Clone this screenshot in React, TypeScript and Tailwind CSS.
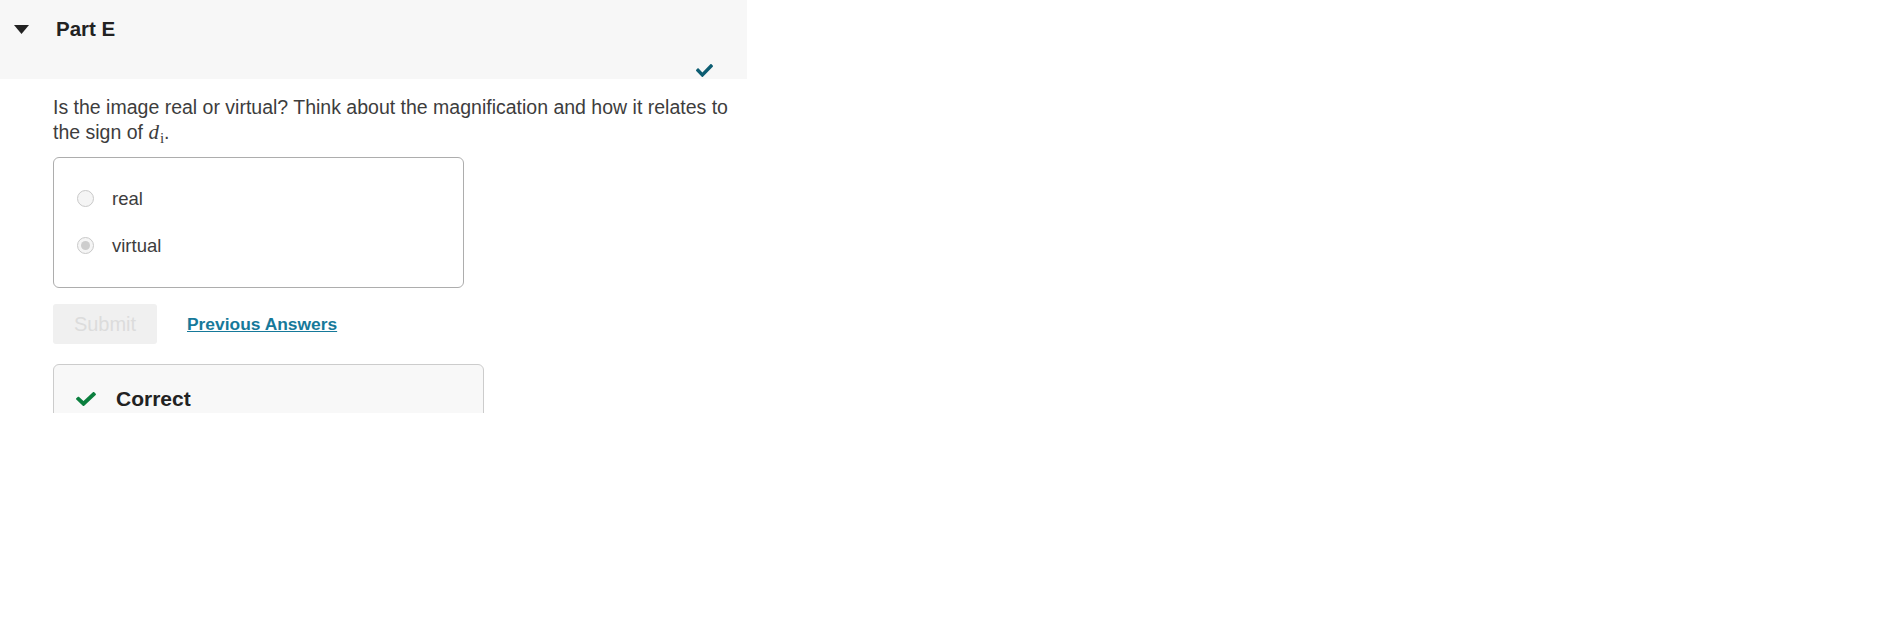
import React from "react";

const font = { fontFamily: '"Liberation Sans", Arial, sans-serif' };

function CheckIcon({ className }: { className?: string }) {
  return (
    <svg viewBox="0 64 512 384" className={className} fill="currentColor" preserveAspectRatio="none">
      <path d="M173.898 439.404l-166.4-166.4c-9.997-9.997-9.997-26.206 0-36.204l36.203-36.204c9.997-9.998 26.207-9.998 36.204 0L192 312.69 432.095 72.596c9.997-9.997 26.207-9.997 36.204 0l36.203 36.204c9.997 9.997 9.997 26.206 0 36.204l-294.4 294.401c-9.998 9.997-26.207 9.997-36.204-.001z" />
    </svg>
  );
}

function Radio({ label, checked }: { label: string; checked?: boolean }) {
  return (
    <label className="flex h-[47px] items-center pl-[23px]">
      <span className="flex h-[17px] w-[17px] items-center justify-center rounded-full border border-[#c9c9c9] bg-[#f5f5f5]">
        {checked && <span className="h-[9px] w-[9px] rounded-full bg-[#cdcdcd]" />}
      </span>
      <span className="ml-[18px] text-[18.5px] leading-6 text-[#3d3d3d]">{label}</span>
    </label>
  );
}

export default function App() {
  return (
    <div className="h-[629px] w-full bg-white" style={font}>
      <div className="h-[413px] w-[747px] overflow-hidden">
        {/* Header */}
        <div className="flex h-[79px] flex-col bg-[#f7f7f7]">
          <div className="flex items-center pl-[14px] pt-[17px]">
            <svg viewBox="0 0 15 9" className="h-[9px] w-[15px] text-[#222]" fill="currentColor">
              <path d="M0 0h15L7.5 9z" />
            </svg>
            <h2 className="ml-[27px] text-[20.5px] font-bold leading-6 text-[#222]">Part E</h2>
          </div>
          <div className="mt-[23px] flex justify-end pr-[34px]">
            <CheckIcon className="h-[13px] w-[17px] text-[#0d5d72]" />
          </div>
        </div>

        {/* Body */}
        <div className="pl-[53px]">
          <p className="mt-4 max-w-[690px] text-[19.5px] leading-[25px] text-[#3d3d3d]">
            Is the image real or virtual? Think about the magnification and how it relates to the sign of{" "}
            <span style={{ fontFamily: '"Liberation Serif", "Times New Roman", serif' }} className="text-[21px]">
              <i>d</i>
              <sub className="ml-[1px] text-[15px] leading-none">i</sub>
            </span>
            .
          </p>

          <div className="mt-3 h-[131px] w-[411px] rounded-md border border-[#adadad] pt-[17px]">
            <Radio label="real" />
            <Radio label="virtual" checked />
          </div>

          <div className="mt-4 flex items-center">
            <button
              disabled
              className="h-10 w-[104px] rounded-[3px] bg-[#f0f0f0] text-[20px] text-[#dcdcdc]"
            >
              Submit
            </button>
            <a href="#" className="ml-[30px] text-[17.4px] font-bold text-[#16799a] underline">
              Previous Answers
            </a>
          </div>

          <div className="mt-5 h-[80px] w-[431px] rounded-md border border-[#cccccc] bg-[#f8f8f8] pl-[22px] pt-[22px]">
            <div className="flex items-center">
              <CheckIcon className="h-[14px] w-[20px] text-[#0b7f3e]" />
              <span className="ml-5 text-[21px] font-bold leading-6 text-[#222]">Correct</span>
            </div>
          </div>
        </div>
      </div>
    </div>
  );
}
